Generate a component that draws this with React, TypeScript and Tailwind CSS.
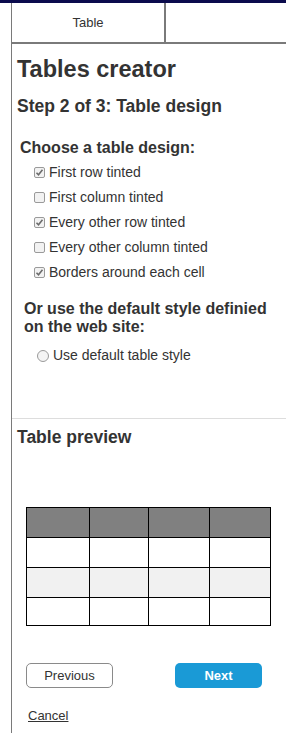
import React from "react";

const font = { fontFamily: '"Liberation Sans", Arial, sans-serif' };

function Check({ on }: { on?: boolean }) {
  return (
    <span className="flex h-[11px] w-[11px] items-center justify-center rounded-[2px] border border-[#9a9a9a] bg-[#f2f2f2]">
      {on && (
        <svg width="9" height="9" viewBox="0 0 9 9">
          <path d="M1.5 4.8 L3.5 6.8 L7.5 1.8" fill="none" stroke="#6b6b6b" strokeWidth="1.6" />
        </svg>
      )}
    </span>
  );
}

const options = [
  { label: "First row tinted", on: true },
  { label: "First column tinted", on: false },
  { label: "Every other row tinted", on: true },
  { label: "Every other column tinted", on: false },
  { label: "Borders around each cell", on: true },
];

const rows = ["bg-[#808080] h-[30px]", "bg-white h-[30px]", "bg-[#f1f1f1] h-[30px]", "bg-white h-[28px]"];
const cols = ["w-[63px]", "w-[59px]", "w-[61px]", "w-[61px]"];

export default function App() {
  return (
    <div className="min-h-[733px] bg-white text-[#333]" style={font}>
      <div className="h-[3px] bg-[#0b0b4d]" />
      <div className="ml-[11px] min-h-[730px] border-l border-[#7a7a7a]">
        {/* tabs */}
        <div className="flex h-[41px] border-b-2 border-[#7a7a7a]">
          <div className="flex w-[154px] items-center justify-center border-r-2 border-[#7a7a7a] text-[13px]">
            Table
          </div>
        </div>

        <div className="pl-[5px]">
          <h1 className="mt-[11px] text-[23.5px] font-bold leading-[28px]">Tables creator</h1>
          <h2 className="mt-[13px] text-[17.5px] font-bold leading-[20px]">Step 2 of 3: Table design</h2>

          <div className="ml-[3px] mt-[22px] text-[16px] font-bold leading-[20px]">Choose a table design:</div>
          <div className="ml-[17px] mt-[2px]">
            {options.map((o) => (
              <div key={o.label} className="flex h-[25px] items-center gap-[4px] text-[14px]">
                <Check on={o.on} />
                <span>{o.label}</span>
              </div>
            ))}
          </div>

          <div className="ml-[7px] mt-[15px] w-[250px] text-[16px] font-bold leading-[18px]">
            Or use the default style definied on the web site:
          </div>
          <div className="ml-[20px] mt-[7px] flex h-[25px] items-center gap-[4px] text-[14px]">
            <span className="h-[12px] w-[12px] rounded-full border border-[#9a9a9a] bg-[#f4f4f4]" />
            <span>Use default table style</span>
          </div>
        </div>

        <div className="mt-[50px] border-t border-[#dddddd]" />

        <div className="pl-[5px]">
          <h2 className="mt-[8px] text-[17.5px] font-bold leading-[20px]">Table preview</h2>

          <table className="ml-[9px] mt-[60px] border-collapse">
            <tbody>
              {rows.map((r, i) => (
                <tr key={i} className={r}>
                  {cols.map((c, j) => (
                    <td key={j} className={`${c} border border-black p-0`} />
                  ))}
                </tr>
              ))}
            </tbody>
          </table>

          <div className="ml-[9px] mt-[37px] flex w-[236px] justify-between">
            <button className="h-[25px] w-[87px] rounded-[5px] border border-[#8a8a8a] bg-white text-[13px] text-[#333]">
              Previous
            </button>
            <button className="h-[25px] w-[87px] rounded-[5px] bg-[#1a9ad6] text-[13px] font-bold text-white">
              Next
            </button>
          </div>

          <a href="#" className="ml-[11px] mt-[20px] block text-[13px] leading-[16px] underline">
            Cancel
          </a>
        </div>
      </div>
    </div>
  );
}
